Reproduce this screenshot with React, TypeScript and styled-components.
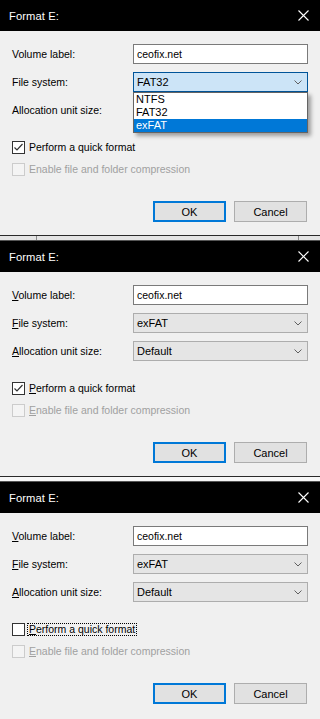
import React from "react";
import styled, { createGlobalStyle, css } from "styled-components";

const GlobalStyle = createGlobalStyle`
  html, body { margin: 0; padding: 0; background: #f0f0f0; }
  body { font-family: "Liberation Sans", Arial, sans-serif; color: #000; }
  * { box-sizing: border-box; }
`;

const Page = styled.div`
  width: 320px;
  display: flex;
  flex-direction: column;
`;

const Dialog = styled.section`
  height: 235px;
  display: flex;
  flex-direction: column;
  background: #f0f0f0;
`;

const TitleBar = styled.header`
  height: 31px;
  flex: none;
  background: #000;
  color: #fff;
  display: flex;
  align-items: center;
  justify-content: space-between;
  padding: 0 11px 0 9px;
`;

const Title = styled.span`
  font-size: 11.2px;
  letter-spacing: 0.1px;
`;

const Body = styled.div`
  flex: 1;
  display: flex;
  flex-direction: column;
  padding: 13px 12px 0 12px;
  font-size: 10.5px;
`;

const FormGrid = styled.div`
  display: grid;
  grid-template-columns: 121px 1fr;
  grid-auto-rows: 20px;
  row-gap: 8px;
  align-items: center;
`;

const Key = styled.span<{ $show: boolean }>`
  text-decoration: ${(p) => (p.$show ? "underline" : "none")};
  text-underline-offset: 1px;
`;

const Field = styled.div`
  height: 20px;
  display: flex;
  align-items: center;
  padding: 0 3px;
  white-space: nowrap;
`;

const TextBox = styled(Field)`
  background: #fff;
  border: 1px solid #7a7a7a;
`;

const Combo = styled(Field)<{ $open?: boolean; $covered?: boolean }>`
  position: relative;
  justify-content: space-between;
  padding-right: 5px;
  font-size: 11px;
  background: #e5e5e5;
  border: 1px solid #adadad;
  ${(p) =>
    p.$open &&
    css`
      background: #cce4f7;
      border-color: #005499;
    `}
  ${(p) =>
    p.$covered &&
    css`
      & > * { visibility: hidden; }
    `}
`;

const ChevronSvg = styled.svg`
  width: 8px;
  height: 5px;
  flex: none;
`;

const DropList = styled.ul`
  position: absolute;
  left: -1px;
  right: -1px;
  top: calc(100% + 1px);
  margin: 0;
  padding: 0;
  list-style: none;
  background: #fff;
  border: 1px solid #646464;
  box-shadow: 3px 3px 4px rgba(0, 0, 0, 0.35);
  z-index: 2;
  visibility: visible;
`;

const DropItem = styled.li<{ $selected?: boolean }>`
  height: 13px;
  line-height: 13px;
  padding-left: 2px;
  font-size: 11px;
  background: ${(p) => (p.$selected ? "#0078d7" : "#fff")};
  color: ${(p) => (p.$selected ? "#fff" : "#000")};
`;

const Checks = styled.div`
  margin-top: 21px;
  display: flex;
  flex-direction: column;
  gap: 9px;
`;

const CheckRow = styled.div<{ $disabled?: boolean }>`
  height: 13px;
  display: flex;
  align-items: center;
  gap: 3px;
  color: ${(p) => (p.$disabled ? "#a0a0a0" : "#000")};
`;

const Box = styled.span<{ $disabled?: boolean }>`
  width: 13px;
  height: 13px;
  flex: none;
  display: flex;
  align-items: center;
  justify-content: center;
  background: ${(p) => (p.$disabled ? "#f4f4f4" : "#fff")};
  border: 1px solid ${(p) => (p.$disabled ? "#cccccc" : "#333333")};
`;

const CheckText = styled.span<{ $focused?: boolean }>`
  line-height: 11px;
  padding: 0 1px;
  outline: ${(p) => (p.$focused ? "1px dotted #000" : "none")};
  outline-offset: 0px;
`;

const Buttons = styled.div`
  margin-top: 25px;
  margin-right: 1px;
  display: flex;
  justify-content: flex-end;
  gap: 8px;
`;

const Button = styled.button<{ $default?: boolean }>`
  width: 73px;
  height: 21px;
  padding: 0;
  font-family: inherit;
  font-size: 11px;
  color: #000;
  background: #e1e1e1;
  border: ${(p) => (p.$default ? "2px solid #0078d7" : "1px solid #adadad")};
`;

const Separator = styled.div<{ $ticks?: boolean }>`
  height: 6px;
  flex: none;
  border-top: 1px solid #2a2a2a;
  background-color: ${(p) => (p.$ticks ? "#e4e4e4" : "#f7f7f7")};
  ${(p) =>
    p.$ticks &&
    css`
      background-image: linear-gradient(#8a8a8a, #8a8a8a), linear-gradient(#8a8a8a, #8a8a8a);
      background-size: 1px 4px, 1px 4px;
      background-position: 36px 0, 298px 0;
      background-repeat: no-repeat;
    `}
  box-shadow: inset 0 -1px 0 #555;
`;

const CloseIcon = () => (
  <svg width="11" height="11" viewBox="0 0 11 11" aria-hidden>
    <path d="M0.5 0.5 L10.5 10.5 M10.5 0.5 L0.5 10.5" stroke="#fff" strokeWidth="1.1" fill="none" />
  </svg>
);

const Chevron = () => (
  <ChevronSvg viewBox="0 0 8 5" aria-hidden>
    <polyline points="0.5,0.5 4,4 7.5,0.5" stroke="#606060" strokeWidth="1" fill="none" />
  </ChevronSvg>
);

const CheckMark = () => (
  <svg width="11" height="11" viewBox="0 0 11 11" aria-hidden>
    <polyline points="1.5,5.5 4,8 9.5,2" stroke="#333" strokeWidth="1.2" fill="none" />
  </svg>
);

const Access = ({ text, show }: { text: string; show: boolean }) => (
  <span>
    <Key $show={show}>{text[0]}</Key>
    {text.slice(1)}
  </span>
);

type Config = {
  keys: boolean;
  fs: string;
  open: boolean;
  quick: boolean;
  focusQuick: boolean;
};

const configs: Config[] = [
  { keys: false, fs: "FAT32", open: true, quick: true, focusQuick: false },
  { keys: true, fs: "exFAT", open: false, quick: true, focusQuick: false },
  { keys: true, fs: "exFAT", open: false, quick: false, focusQuick: true },
];

const options = ["NTFS", "FAT32", "exFAT"];

const FormatDialog = ({ c }: { c: Config }) => (
  <Dialog>
    <TitleBar>
      <Title>Format E:</Title>
      <CloseIcon />
    </TitleBar>
    <Body>
      <FormGrid>
        <Access text="Volume label:" show={c.keys} />
        <TextBox>ceofix.net</TextBox>
        <Access text="File system:" show={c.keys} />
        <Combo $open={c.open}>
          <span>{c.fs}</span>
          <Chevron />
          {c.open && (
            <DropList>
              {options.map((o) => (
                <DropItem key={o} $selected={o === "exFAT"}>
                  {o}
                </DropItem>
              ))}
            </DropList>
          )}
        </Combo>
        <Access text="Allocation unit size:" show={c.keys} />
        <Combo $covered={c.open}>
          {!c.open && <span>Default</span>}
          <Chevron />
        </Combo>
      </FormGrid>
      <Checks>
        <CheckRow>
          <Box>{c.quick && <CheckMark />}</Box>
          <CheckText $focused={c.focusQuick}>
            <Access text="Perform a quick format" show={c.keys} />
          </CheckText>
        </CheckRow>
        <CheckRow $disabled>
          <Box $disabled />
          <CheckText>
            <Access text="Enable file and folder compression" show={c.keys} />
          </CheckText>
        </CheckRow>
      </Checks>
      <Buttons>
        <Button $default>OK</Button>
        <Button>Cancel</Button>
      </Buttons>
    </Body>
  </Dialog>
);

export default function App() {
  return (
    <>
      <GlobalStyle />
      <Page>
        <FormatDialog c={configs[0]} />
        <Separator $ticks />
        <FormatDialog c={configs[1]} />
        <Separator />
        <FormatDialog c={configs[2]} />
      </Page>
    </>
  );
}
